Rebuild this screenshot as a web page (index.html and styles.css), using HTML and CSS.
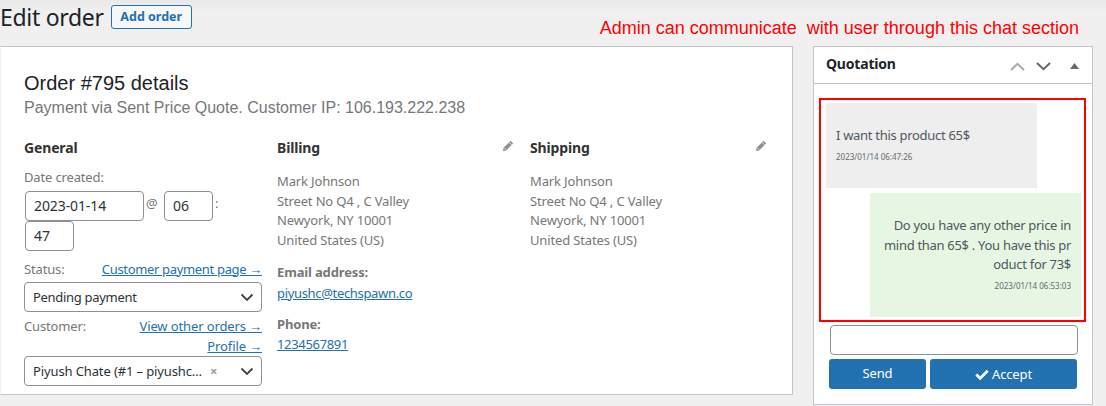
FILE: index.html
```html
<!DOCTYPE html>
<html lang="en">
<head>
<meta charset="utf-8">
<title>Edit order</title>
<link rel="stylesheet" href="styles.css">
</head>
<body>
<header class="top">
  <h1 class="page-title">Edit order</h1>
  <a class="add-btn">Add order</a>
  <p class="note">Admin can communicate&nbsp; with user through this chat section</p>
</header>
<div class="columns">
  <main class="panel">
    <h2 class="order-title">Order #795 details</h2>
    <p class="order-meta">Payment via Sent Price Quote. Customer IP: 106.193.222.238</p>
    <div class="order-grid">
      <section class="col">
        <h3 class="col-title">General</h3>
        <div class="field-label date-label">Date created:</div>
        <div class="date-row">
          <input class="inp inp-date" value="2023-01-14"><span class="sep">@</span><input class="inp inp-time" value="06"><span class="sep sep-colon">:</span>
          <input class="inp inp-time" value="47">
        </div>
        <div class="label-row status-row"><span class="field-label">Status:</span><a class="link">Customer payment page →</a></div>
        <div class="select">
          <span class="select-text">Pending payment</span>
          <svg class="chev" width="14" height="9" viewBox="0 0 14 9"><path d="M1.5 1.500 7 7l5.500-5.500" fill="none" stroke="#3c434a" stroke-width="1.800"/></svg>
        </div>
        <div class="label-row customer-row"><span class="field-label">Customer:</span><span class="links"><a class="link link-wide">View other orders →</a><a class="link link-wide">Profile →</a></span></div>
        <div class="select">
          <span class="select-text select-customer">Piyush Chate (#1 – piyushc…</span>
          <span class="clear">×</span>
          <svg class="chev" width="14" height="9" viewBox="0 0 14 9"><path d="M1.5 1.500 7 7l5.500-5.500" fill="none" stroke="#3c434a" stroke-width="1.800"/></svg>
        </div>
      </section>
      <section class="col">
        <h3 class="col-title">Billing
          <svg class="pencil" width="12" height="12" viewBox="0 0 12 12"><path d="M8.600 .8 11.200 3.400 4.200 10.400 1 11l.6-3.200z" fill="#8c8f94"/><path d="M7.200 2.400l2.400 2.400M2.500 8l1.600 1.600" stroke="#fff" stroke-width=".8" fill="none"/></svg>
        </h3>
        <address class="addr">Mark Johnson<br>Street No Q4 , C Valley<br>Newyork, NY 10001<br>United States (US)</address>
        <div class="contact-label">Email address:</div>
        <a class="link contact-value">piyushc@techspawn.co</a>
        <div class="contact-label">Phone:</div>
        <a class="link contact-value phone-value">1234567891</a>
      </section>
      <section class="col">
        <h3 class="col-title">Shipping
          <svg class="pencil" width="12" height="12" viewBox="0 0 12 12"><path d="M8.600 .8 11.200 3.400 4.200 10.400 1 11l.6-3.200z" fill="#8c8f94"/><path d="M7.200 2.400l2.400 2.400M2.500 8l1.600 1.600" stroke="#fff" stroke-width=".8" fill="none"/></svg>
        </h3>
        <address class="addr">Mark Johnson<br>Street No Q4 , C Valley<br>Newyork, NY 10001<br>United States (US)</address>
      </section>
    </div>
  </main>
  <aside class="side">
    <div class="side-head">
      <h2 class="side-title">Quotation</h2>
      <svg class="arrow arrow-up" width="15" height="9" viewBox="0 0 15 9"><path d="M1 8 7.500 1.800 14 8" fill="none" stroke="#a7aaad" stroke-width="2"/></svg>
      <svg class="arrow arrow-down" width="15" height="9" viewBox="0 0 15 9"><path d="M1 1 7.500 7.200 14 1" fill="none" stroke="#646970" stroke-width="2"/></svg>
      <svg class="arrow arrow-toggle" width="9" height="6" viewBox="0 0 9 6"><path d="M4.500 0 9 6H0z" fill="#646970"/></svg>
    </div>
    <div class="chat">
      <div class="bubble bubble-in">
        <p class="msg">I want this product 65$</p>
        <time class="stamp">2023/01/14 06:47:26</time>
      </div>
      <div class="bubble bubble-out">
        <p class="msg">Do you have any other price in<br>mind than 65$ . You have this pr<br>oduct for 73$</p>
        <time class="stamp">2023/01/14 06:53:03</time>
      </div>
    </div>
    <input class="inp chat-input">
    <div class="actions">
      <a class="btn btn-send">Send</a>
      <a class="btn btn-accept"><svg width="14" height="11" viewBox="0 0 14 11"><path d="M1.300 5.500 5.200 9.300 12.700 1.800" fill="none" stroke="#fff" stroke-width="2.800"/></svg>Accept</a>
    </div>
  </aside>
</div>
</body>
</html>
```

FILE: styles.css
```css
* { box-sizing: border-box; }
html, body { margin: 0; height: 100%; overflow: hidden; }
body {
  width: 1106px;
  height: 406px;
  background: linear-gradient(#e9e9e9 0, #f0f0f0 14px);
  font-family: "Noto Sans", sans-serif;
  font-size: 13px;
  line-height: 19.5px;
  letter-spacing: -.15px;
  color: #646970;
}
.top { display: flex; align-items: flex-start; height: 46px; }
.page-title {
  margin: 2px 0 0;
  font-size: 23px;
  font-weight: 400;
  line-height: 30px;
  color: #1d2327;
  letter-spacing: -.3px;
}
.add-btn {
  margin: 5px 0 0 7px;
  width: 81px;
  height: 24px;
  border: 1px solid #2271b1;
  border-radius: 3px;
  background: #f6f7f7;
  color: #2271b1;
  font-weight: 700;
  font-size: 12.5px;
  line-height: 22px;
  text-align: center;
  letter-spacing: 0;
}
.note {
  margin: 17px 0 0 408px;
  font-family: "Liberation Sans", sans-serif;
  font-size: 18px;
  line-height: 22px;
  letter-spacing: 0;
  color: #f00;
  white-space: nowrap;
}
.columns { display: flex; align-items: flex-start; gap: 20px; }
.panel {
  width: 793px;
  height: 349px;
  padding: 25px 23px 0;
  background: #fff;
  border: 1px solid #c3c4c7;
  border-left-color: #eee;
  overflow: hidden;
}
.order-title {
  margin: 0;
  font-family: "Liberation Sans", sans-serif;
  font-size: 20px;
  font-weight: 400;
  line-height: 23px;
  letter-spacing: 0;
  color: #1d2327;
}
.order-meta {
  margin: 1px 0 0;
  font-family: "Liberation Sans", sans-serif;
  font-size: 16px;
  line-height: 24px;
  letter-spacing: 0;
  color: #777;
}
.order-grid { display: grid; grid-template-columns: repeat(3, 253px); margin-top: 18px; }
.col { min-width: 0; }
.col-title {
  position: relative;
  margin: 0;
  font-size: 14px;
  font-weight: 700;
  line-height: 20px;
  color: #333;
}
.pencil { position: absolute; right: 16px; top: 2px; }
.field-label { color: #777; }
.date-label { margin-top: 10px; }
.date-row { display: flex; flex-wrap: wrap; align-items: flex-start; margin-top: 3px; width: 238px; padding-left: 1px; }
.inp {
  display: block;
  height: 30px;
  padding: 0 8px;
  border: 1px solid #8c8f94;
  border-radius: 4px;
  background: #fff;
  color: #2c3338;
  font: 14px/28px "Noto Sans", sans-serif;
  letter-spacing: -.1px;
  outline: none;
}
.inp-date { width: 119px; }
.inp-time { width: 49px; }
.sep { width: 20px; height: 24px; padding: 3px 0 0 2px; color: #777; }
.sep-colon { width: 8px; }
.label-row { display: flex; justify-content: space-between; width: 238px; }
.status-row { margin-top: 9px; margin-bottom: 3px; }
.customer-row { margin-top: 5px; }
.links { display: flex; flex-direction: column; align-items: flex-end; }
.link { color: #2271b1; text-decoration: underline; letter-spacing: -.33px; }
.link-wide { letter-spacing: -.12px; }
.select {
  position: relative;
  width: 238px;
  height: 30px;
  padding: 0 8px;
  border: 1px solid #8c8f94;
  border-radius: 4px;
  background: #fff;
  color: #2c3338;
  line-height: 28px;
  letter-spacing: -.3px;
  white-space: nowrap;
}
.select-customer { letter-spacing: -.12px; }
.chev { position: absolute; right: 7px; top: 10px; }
.clear { position: absolute; left: 185px; top: 0; color: #999; font-weight: 700; }
.addr { margin: 14px 0 0; padding-bottom: 1px; font-style: normal; color: #777; }
.contact-label { margin-top: 12px; font-weight: 700; color: #777; }
.contact-value { display: block; width: max-content; margin-top: 1px; }
.phone-value { margin-top: 0; }
.side {
  width: 280px;
  height: 359px;
  background: #fff;
  border: 1px solid #c3c4c7;
}
.side-head {
  display: flex;
  align-items: center;
  height: 37px;
  padding-left: 12px;
  border-bottom: 1px solid #c3c4c7;
}
.side-title {
  flex: 1;
  margin: -2px 0 0;
  font-size: 14px;
  font-weight: 700;
  line-height: 20px;
  letter-spacing: -.2px;
  color: #1d2327;
}
.arrow-up { margin-top: 3px; }
.arrow-down { margin: 3px 0 0 11px; }
.arrow-toggle { margin: 1px 13px 0 19px; }
.chat {
  margin: 14px 6px 0 5px;
  padding: 3px 5px;
  height: 224px;
  border: 2px solid #f00;
}
.bubble { width: 211px; color: #50575e; letter-spacing: -.3px; white-space: nowrap; }
.bubble-in { height: 85px; padding: 23px 10px 0; background: #eee; }
.bubble-out { height: 124px; margin: 5px 0 0 44px; padding: 23px 10px 0; background: #e6f6e3; text-align: right; }
.msg { margin: 0; }
.stamp { display: block; margin-top: 4px; font-size: 8px; line-height: 14px; letter-spacing: 0; color: #646970; }
.chat-input { width: 248px; height: 30px; margin: 3px 0 0 16px; }
.actions { display: flex; gap: 4px; margin: 4px 0 0 15px; }
.btn {
  display: flex;
  align-items: center;
  justify-content: center;
  gap: 3px;
  height: 30px;
  border-radius: 3px;
  background: #2271b1;
  color: #fff;
  font-size: 13px;
}
.btn-send { width: 97px; }
.btn-accept { width: 147px; padding-top: 1px; }
```
